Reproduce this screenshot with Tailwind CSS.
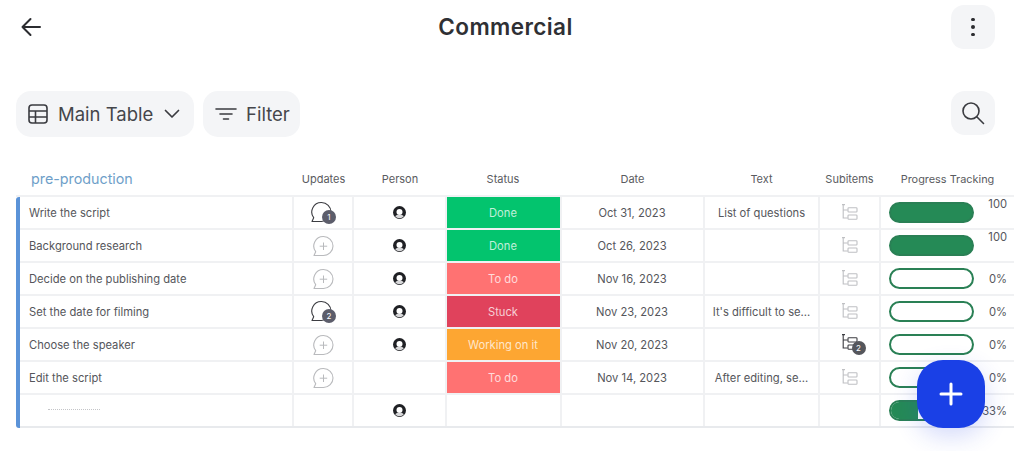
<!DOCTYPE html>
<html lang="en">
<head>
  <meta charset="UTF-8">
  <meta name="viewport" content="width=device-width, initial-scale=1.0">
  <title>Commercial</title>
  <script src="https://cdn.jsdelivr.net/npm/@tailwindcss/browser@4"></script>
</head>
<body class="bg-white h-[451px] w-[1024px] overflow-hidden relative font-['Inter','Liberation_Sans',sans-serif] text-[#3f4045]">

  <!-- top bar -->
  <div class="flex items-center justify-between h-[54px] pl-[21px] pr-[29px]">
    <svg width="20" height="20" viewBox="0 0 20 20" fill="none" stroke="#2b2c30" stroke-width="2" stroke-linecap="round" stroke-linejoin="round"><path d="M19 10H1.5M9.5 2 1.5 10l8 8"/></svg>
    <h1 class="text-[22.5px] font-semibold text-[#2f3034] ml-[19px] tracking-[0.4px]">Commercial</h1>
    <button class="w-[44px] h-[44px] rounded-[13px] bg-[#f4f5f7] flex flex-col items-center justify-center gap-[4px]">
      <span class="w-[3.5px] h-[3.5px] rounded-full bg-[#2b2c30]"></span>
      <span class="w-[3.5px] h-[3.5px] rounded-full bg-[#2b2c30]"></span>
      <span class="w-[3.5px] h-[3.5px] rounded-full bg-[#2b2c30]"></span>
    </button>
  </div>

  <!-- toolbar -->
  <div class="flex items-start mt-[37px] pl-[16px] pr-[29px]">
    <button class="w-[178px] h-[46px] rounded-[15px] bg-[#f4f5f7] flex items-center pl-[12px] text-[18.5px] text-[#45464b]">
      <svg width="20" height="20" viewBox="0 0 20 20" fill="none" stroke="#3a3b40" stroke-width="1.6"><rect x="1" y="1" width="18" height="18" rx="3"/><path d="M1 7h18M1 13h18M7.5 7v12"/></svg>
      <span class="ml-[10px] pt-[1px]">Main Table</span>
      <svg class="ml-[11px]" width="16" height="10" viewBox="0 0 16 10" fill="none" stroke="#3a3b40" stroke-width="1.7" stroke-linecap="round" stroke-linejoin="round"><path d="M1.5 1.5 8 8l6.5-6.5"/></svg>
    </button>
    <button class="w-[97px] h-[46px] rounded-[15px] bg-[#f4f5f7] flex items-center pl-[12px] ml-[9px] text-[18.5px] text-[#45464b]">
      <svg width="22" height="14" viewBox="0 0 22 14" fill="none" stroke="#3a3b40" stroke-width="1.6" stroke-linecap="round"><path d="M1 2h20M5 7h12M8.5 12h5"/></svg>
      <span class="ml-[9px] pt-[1px]">Filter</span>
    </button>
    <button class="ml-auto w-[44px] h-[44px] rounded-[14px] bg-[#f4f5f7] flex items-center justify-center">
      <svg width="24" height="24" viewBox="0 0 24 24" fill="none" stroke="#3a3b40" stroke-width="1.6" stroke-linecap="round"><circle cx="10" cy="10" r="8"/><path d="m16 16 6.5 6.5"/></svg>
    </button>
  </div>

  <!-- table -->
  <div class="ml-[16px] w-[998px] mt-[28px]">
    <div class="flex h-[32px] items-center pl-[4px] text-[11px] text-[#5a5b60] border-b-2 border-[#f0f1f3]">
      <div class="w-[274px] pl-[11px] pb-[2px] text-[14.3px] text-[#6f9fc9]">pre-production</div>
      <div class="w-[60px] text-center pb-[1px] pr-[1px]">Updates</div>
      <div class="w-[93px] text-center pb-[1px] pr-[1px]">Person</div>
      <div class="w-[115px] text-center pb-[1px] pr-[3px]">Status</div>
      <div class="w-[143px] text-center pb-[1px] pr-[2px]">Date</div>
      <div class="w-[115px] text-center pb-[1px] pr-[2px]">Text</div>
      <div class="w-[61px] text-center pb-[1px] pr-[2px] whitespace-nowrap">Subitems</div>
      <div class="w-[133px] text-center pb-[1px] text-[10.9px] whitespace-nowrap">Progress Tracking</div>
    </div>
    <div id="rows" class="border-l-4 border-[#5b93d8] rounded-l-[3px]"></div>
  </div>

  <!-- add button -->
  <button class="absolute left-[917px] top-[360px] w-[68px] h-[68px] rounded-[26px] bg-[#1a40e6] flex items-center justify-center shadow-[0_8px_24px_rgba(40,70,230,0.2)]">
    <svg width="24" height="24" viewBox="0 0 24 24" fill="none" stroke="#ffffff" stroke-width="3" stroke-linecap="round"><path d="M12 2v20M2 12h20"/></svg>
  </button>

  <script>
    const person = `<svg class="-ml-[1px]" width="13" height="13" viewBox="0 0 13 13"><circle cx="6.5" cy="6.5" r="6.500" fill="#1f2024"/><circle cx="6.5" cy="6" r="3" fill="#ffffff"/><path d="M2.200 10.200c1-1.100 2.500-1.500 4.300-1.500s3.300.4 4.300 1.500c-1 1.300-2.500 2-4.300 2s-3.300-.7-4.300-2z" fill="#d8d8da"/></svg>`;

    function bubble(color) {
      return `<path d="M11.500 1.500a9.500 9.500 0 0 1 0 19H2l1.700-3.800A9.500 9.500 0 0 1 11.500 1.500z" fill="none" stroke="${color}" stroke-width="1.100" stroke-linejoin="round"/>`;
    }

    function updates(count) {
      if (count) {
        return `<span class="relative inline-block w-[26px] h-[23px] -mt-[1px]"><svg class="absolute left-0 top-0" width="22" height="22" viewBox="0 0 22 22">${bubble('#3c3d42')}</svg><span class="absolute right-0 bottom-0 w-[14px] h-[14px] rounded-full bg-[#5c5d6b] text-white text-[8px] leading-[14px] text-center">${count}</span></span>`;
      }
      return `<svg width="22" height="22" viewBox="0 0 22 22">${bubble('#b9babd')}<path d="M11.500 7.500v7.500M7.700 11.200h7.500" stroke="#b9babd" stroke-width="1"/></svg>`;
    }

    function subitems(count) {
      const color = count ? '#3c3d42' : '#bfc0c3';
      const tree = `<svg width="17" height="17" viewBox="0 0 17 17" fill="none" stroke="${color}" stroke-width="1.100"><path d="M1 .6h3M2.200 .6V14h4.500M2.200 6h4.500"/><rect x="7" y="3.700" width="9" height="4.300" rx=".8"/><rect x="7" y="11" width="9" height="4.300" rx=".8"/></svg>`;
      if (count) {
        return `<span class="relative inline-block w-[25px] h-[19px] ml-[7px] -mt-[2px]">${tree}<span class="absolute right-0 bottom-[-2px] w-[14px] h-[14px] rounded-full bg-[#55565c] text-white text-[8px] leading-[14px] text-center">${count}</span></span>`;
      }
      return tree;
    }

    const items = [
      { name: 'Write the script', updates: 1, person: true, status: 'Done', color: 'bg-[#03c46e]', date: 'Oct 31, 2023', text: 'List of questions', sub: 0, pct: 100, label: '100' },
      { name: 'Background research', updates: 0, person: true, status: 'Done', color: 'bg-[#03c46e]', date: 'Oct 26, 2023', text: '', sub: 0, pct: 100, label: '100' },
      { name: 'Decide on the publishing date', updates: 0, person: true, status: 'To do', color: 'bg-[#ff7272]', date: 'Nov 16, 2023', text: '', sub: 0, pct: 0, label: '0%' },
      { name: 'Set the date for filming', updates: 2, person: true, status: 'Stuck', color: 'bg-[#e0425c]', date: 'Nov 23, 2023', text: "It's difficult to se...", sub: 0, pct: 0, label: '0%' },
      { name: 'Choose the speaker', updates: 0, person: true, status: 'Working on it', color: 'bg-[#fda632]', date: 'Nov 20, 2023', text: '', sub: 2, pct: 0, label: '0%' },
      { name: 'Edit the script', updates: 0, person: false, status: 'To do', color: 'bg-[#ff7272]', date: 'Nov 14, 2023', text: 'After editing, se...', sub: 0, pct: 0, label: '0%' },
    ];

    const cell = 'h-full flex items-center justify-center border-r-2 border-[#f0f1f3]';

    let html = '';
    items.forEach((item) => {
      html += `
        <div class="flex h-[33px] items-center text-[11.2px] text-[#55565b] border-b-2 border-[#f0f1f3]">
          <div class="w-[274px] h-full flex items-center pl-[9px] pt-[1px] border-r-2 border-[#f0f1f3]">${item.name}</div>
          <div class="w-[60px] ${cell}">${updates(item.updates)}</div>
          <div class="w-[93px] ${cell}">${item.person ? person : ''}</div>
          <div class="w-[115px] pt-[1px] pr-[1px] ${cell} ${item.color} text-white/75">${item.status}</div>
          <div class="w-[143px] pt-[1px] pr-[1px] ${cell}">${item.date}</div>
          <div class="w-[115px] pt-[1px] ${cell}">${item.text}</div>
          <div class="w-[61px] ${cell}">${subitems(item.sub)}</div>
          <div class="w-[133px] h-full flex items-center pl-[8px] pr-[7px]">
            <span class="w-[85px] h-[21px] rounded-full border-[2.5px] border-[#2a8055] ${item.pct ? 'bg-[#258a56]' : ''}"></span>
            <span class="ml-auto ${item.pct ? 'self-start -mt-[1px]' : 'pt-[1px]'}">${item.label}</span>
          </div>
        </div>`;
    });

    html += `
      <div class="flex h-[33px] items-center text-[11.2px] text-[#55565b] border-b-2 border-[#e8eaed]">
        <div class="w-[274px] h-full flex items-center pl-[28px] border-r-2 border-[#f0f1f3]"><span class="h-[1px] w-[52px] border-t border-dotted border-[#c4c5c8] -mt-[3px]"></span></div>
        <div class="w-[60px] ${cell}"></div>
        <div class="w-[93px] ${cell}">${person}</div>
        <div class="w-[115px] ${cell}"></div>
        <div class="w-[143px] ${cell}"></div>
        <div class="w-[115px] ${cell}"></div>
        <div class="w-[61px] ${cell}"></div>
        <div class="w-[133px] h-full flex items-center pl-[8px] pr-[7px]">
          <span class="w-[85px] h-[21px] rounded-full border-[2.5px] border-[#2a8055] overflow-hidden flex"><span class="bg-[#258a56] h-full" style="width:33%"></span></span>
          <span class="ml-auto pt-[1px]">33%</span>
        </div>
      </div>`;

    document.getElementById('rows').innerHTML = html;
  </script>
</body>
</html>
